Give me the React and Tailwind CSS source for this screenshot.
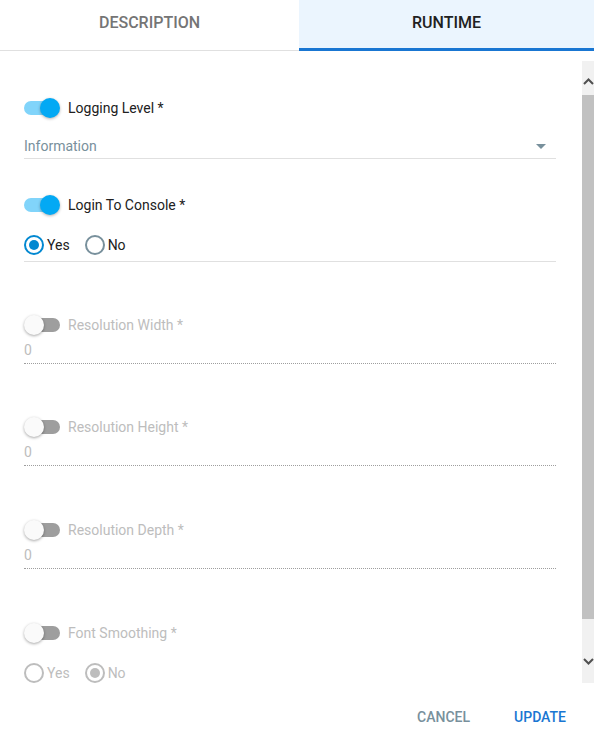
import React, { useState } from 'react';

const Toggle = ({ on, disabled }) => {
    if (disabled) {
        return (
            <span className="relative inline-block w-[36px] h-[20px] shrink-0">
                <span className="absolute left-[6px] right-0 top-[3px] h-[14px] rounded-full bg-[#9e9e9e]"></span>
                <span className="absolute left-0 top-0 w-[20px] h-[20px] rounded-full bg-[#fafafa] shadow-[0_1px_3px_rgba(0,0,0,0.35)]"></span>
            </span>
        );
    }
    return (
        <span className="relative inline-block w-[36px] h-[20px] shrink-0">
            <span className="absolute left-0 right-[4px] top-[3px] h-[14px] rounded-full bg-[#81d4fa]"></span>
            <span className={`absolute top-0 w-[20px] h-[20px] rounded-full bg-[#03a9f4] shadow-[0_1px_3px_rgba(0,0,0,0.3)] ${on ? 'right-0' : 'left-0'}`}></span>
        </span>
    );
};

const Radio = ({ checked, disabled, label }) => {
    const ring = disabled ? 'border-[#bdbdbd]' : checked ? 'border-[#0288d1]' : 'border-[#78909c]';
    const dot = disabled ? 'bg-[#bdbdbd]' : 'bg-[#0288d1]';
    return (
        <span className="flex items-center">
            <span className={`w-[20px] h-[20px] rounded-full border-2 ${ring} flex items-center justify-center`}>
                {checked && <span className={`w-[10px] h-[10px] rounded-full ${dot}`}></span>}
            </span>
            <span className={`ml-[3px] text-[14px] ${disabled ? 'text-[#bdbdbd]' : 'text-[#212121]'}`}>{label}</span>
        </span>
    );
};

const ToggleRow = ({ label, on, disabled }) => (
    <div className="flex items-center h-6">
        <Toggle on={on} disabled={disabled} />
        <span className={`ml-[8px] text-[14px] ${disabled ? 'text-[#bdbdbd]' : 'text-[#212121]'}`}>{label}</span>
    </div>
);

const NumberField = ({ label, mt }) => (
    <div className={mt}>
        <ToggleRow label={label} disabled />
        <div className="mt-[3px] h-5 pb-[3px] box-content border-b border-dotted border-[#9e9e9e] text-[14px] leading-5 text-[#bdbdbd]">0</div>
    </div>
);

export default function App() {
    const [tab, setTab] = useState('runtime');

    return (
        <div className="w-[594px] h-[742px] bg-white flex flex-col overflow-hidden" style={{ fontFamily: 'Roboto, "Liberation Sans", sans-serif' }}>
            {/* Tabs */}
            <div className="flex h-[51px] border-b border-[#e0e0e0]">
                <button
                    onClick={() => setTab('description')}
                    className={`w-[299px] h-[50px] pb-[5px] flex items-center justify-center text-[16px] font-medium uppercase ${tab === 'description' ? 'bg-[#ebf5fe] text-[#212121] border-b-[3px] border-[#1976d2]' : 'text-[#757575]'}`}
                >
                    Description
                </button>
                <button
                    onClick={() => setTab('runtime')}
                    className={`flex-1 h-[51px] pb-[3px] flex items-center justify-center text-[16px] font-medium uppercase ${tab === 'runtime' ? 'bg-[#ebf5fe] text-[#212121] border-b-[3px] border-[#1976d2]' : 'text-[#757575]'}`}
                >
                    Runtime
                </button>
            </div>

            {/* Body */}
            <div className="flex h-[634px]">
                <div className="flex-1 overflow-hidden pl-6 pr-[26px]">
                    <div className="mt-[45px]">
                        <ToggleRow label="Logging Level *" on />
                        <div className="mt-4 h-5 pb-[2px] box-content border-b border-[#e0e0e0] flex items-center justify-between">
                            <span className="text-[14px] text-[#78909c]">Information</span>
                            <svg width="10" height="5" viewBox="0 0 10 5" className="mr-[10px]">
                                <path d="M0 0 L10 0 L5 5 Z" fill="#78909c" />
                            </svg>
                        </div>
                    </div>

                    <div className="mt-[34px]">
                        <ToggleRow label="Login To Console *" on />
                        <div className="mt-[18px] h-5 pb-[6px] box-content border-b border-[#e0e0e0] flex items-center gap-[15px]">
                            <Radio checked label="Yes" />
                            <Radio label="No" />
                        </div>
                    </div>

                    <NumberField label="Resolution Width *" mt="mt-[51px]" />
                    <NumberField label="Resolution Height *" mt="mt-[51px]" />
                    <NumberField label="Resolution Depth *" mt="mt-[52px]" />

                    <div className="mt-[52px]">
                        <ToggleRow label="Font Smoothing *" disabled />
                        <div className="mt-[18px] h-5 flex items-center gap-[15px]">
                            <Radio disabled label="Yes" />
                            <Radio disabled checked label="No" />
                        </div>
                    </div>
                </div>

                {/* Scrollbar */}
                <div className="w-[12px] mt-[10px] h-[622px] bg-[#f1f1f1] flex flex-col">
                    <div className="h-[34px] flex items-end justify-center pb-[10px]">
                        <svg width="11" height="7" viewBox="0 0 11 7">
                            <path d="M1 6 L5.5 1.5 L10 6" fill="none" stroke="#505050" strokeWidth="2" />
                        </svg>
                    </div>
                    <div className="h-[524px] bg-[#c1c1c1]"></div>
                    <div className="flex-1 flex items-end justify-center pb-[18px]">
                        <svg width="11" height="7" viewBox="0 0 11 7">
                            <path d="M1 1 L5.5 5.5 L10 1" fill="none" stroke="#505050" strokeWidth="2" />
                        </svg>
                    </div>
                </div>
            </div>

            {/* Footer */}
            <div className="flex-1 flex items-center justify-end pr-[12px] gap-[12px] pt-[8px]">
                <button className="px-4 h-9 text-[14px] font-medium uppercase text-[#78909c]">Cancel</button>
                <button className="px-4 h-9 text-[14px] font-medium uppercase text-[#1976d2]">Update</button>
            </div>
        </div>
    );
}
